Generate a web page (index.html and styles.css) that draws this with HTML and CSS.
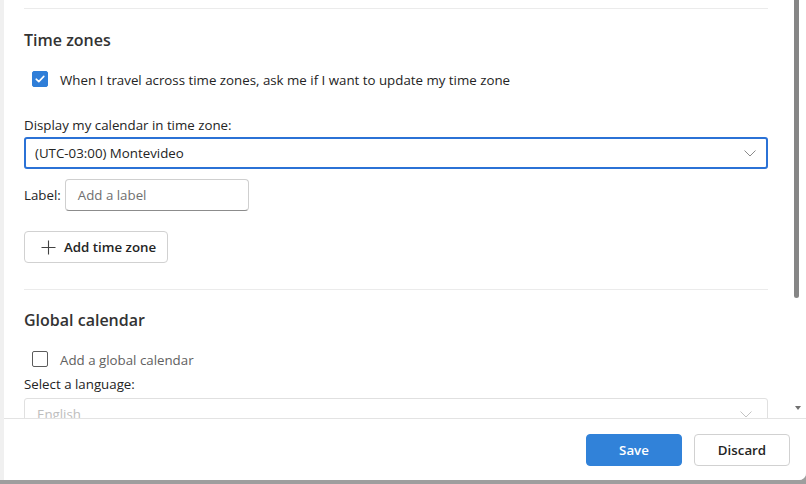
FILE: index.html
```html
<!DOCTYPE html>
<html>
	<head>
		<meta charset="UTF-8">
		<title>Calendar settings</title>
		<link rel="stylesheet" href="styles.css">
	</head>
	<body>
		<div class="window">
			<div class="dialog">
				<div class="scroll">
					<div class="content">
						<div class="divider"></div>

						<!--时区-->
						<h2 class="heading">Time zones</h2>
						<label class="check-row">
							<span class="box checked">
								<svg width="10" height="8" viewBox="0 0 10 8"><path d="M1.2 4.2 L3.8 6.6 L8.8 1.4" fill="none" stroke="#fff" stroke-width="1.6" stroke-linecap="round" stroke-linejoin="round"/></svg>
							</span>
							<span class="check-text">When I travel across time zones, ask me if I want to update my time zone</span>
						</label>

						<div class="field-label">Display my calendar in time zone:</div>
						<div class="select focused">
							<span>(UTC-03:00) Montevideo</span>
							<svg class="chevron" width="12" height="7" viewBox="0 0 12 7"><path d="M0.5 0.5 L6 6 L11.5 0.5" fill="none" stroke="#8a8a8a" stroke-width="1"/></svg>
						</div>

						<div class="label-row">
							<span>Label:</span>
							<div class="input">Add a label</div>
						</div>

						<button class="btn-add">
							<svg width="15" height="15" viewBox="0 0 15 15"><path d="M7.5 0.5 V14.5 M0.5 7.5 H14.5" stroke="#424242" stroke-width="1.1"/></svg>
							<span>Add time zone</span>
						</button>

						<div class="divider second"></div>

						<!--全球日历-->
						<h2 class="heading">Global calendar</h2>
						<label class="check-row">
							<span class="box"></span>
							<span class="check-text muted">Add a global calendar</span>
						</label>

						<div class="field-label tight">Select a language:</div>
						<div class="select disabled">
							<span>English</span>
							<svg class="chevron" width="12" height="7" viewBox="0 0 12 7"><path d="M0.5 0.5 L6 6 L11.5 0.5" fill="none" stroke="#c4c4c4" stroke-width="1"/></svg>
						</div>
					</div>
					<div class="scroll-thumb"></div>
					<div class="scroll-arrow"></div>
				</div>

				<div class="footer">
					<button class="btn primary">Save</button>
					<button class="btn">Discard</button>
				</div>
			</div>
		</div>
	</body>
</html>
```

FILE: styles.css
```css
*{
	padding: 0;
	margin: 0;
	box-sizing: border-box;
}
body{
	width: 806px;
	height: 484px;
	overflow: hidden;
	background-color: #9e9e9e;
	font-family: "Open Sans", "Noto Sans", sans-serif;
	font-size: 13.3px;
	color: #242424;
}
.window{
	height: 480px;
	background-color: #f0f0f0;
	padding-left: 4px;
	border-bottom-right-radius: 7px;
}
.dialog{
	height: 480px;
	background-color: #fff;
	border-bottom-right-radius: 7px;
	display: flex;
	flex-direction: column;
}
.scroll{
	height: 418px;
	overflow: hidden;
	position: relative;
}
.content{
	padding: 8px 38px 0 20px;
}
.divider{
	height: 1px;
	background-color: #ebebeb;
}
.divider.second{
	margin-top: 26px;
}
.heading{
	margin-top: 19px;
	font-size: 16px;
	font-weight: 600;
	line-height: 24px;
	color: #333;
}
.divider.second + .heading{
	margin-top: 18px;
}
.check-row{
	display: flex;
	align-items: center;
	gap: 12px;
	margin-top: 19px;
	padding-left: 8px;
	height: 16px;
}
.box{
	width: 16px;
	height: 16px;
	border: 1px solid #5c5c5c;
	border-radius: 2px;
	display: flex;
	align-items: center;
	justify-content: center;
	flex-shrink: 0;
}
.box.checked{
	background-color: #2f7ed8;
	border-color: #2f7ed8;
}
.check-text{
	line-height: 16px;
	padding-top: 1px;
}
.check-text.muted{
	color: #616161;
	padding-top: 2px;
}
.field-label{
	margin-top: 28px;
	line-height: 20px;
}
.field-label.tight{
	margin-top: 7px;
}
.select{
	margin-top: 2px;
	height: 32px;
	display: flex;
	align-items: center;
	justify-content: space-between;
	padding: 0 10px 0 9px;
	border-radius: 3px;
}
.select.focused{
	border: 2px solid #2b72d6;
}
.select.disabled{
	margin-top: 4px;
	border: 1px solid #e0e0e0;
	color: #bdbdbd;
	padding: 0 15px 0 12px;
}
.label-row{
	margin-top: 10px;
	display: flex;
	align-items: center;
	gap: 4px;
}
.input{
	width: 184px;
	height: 32px;
	border: 1px solid #cfcfcf;
	border-bottom-color: #8c8c8c;
	border-radius: 4px;
	padding-left: 12px;
	line-height: 30px;
	color: #707070;
}
.btn-add{
	margin-top: 20px;
	height: 32px;
	width: 144px;
	display: flex;
	align-items: center;
	gap: 8px;
	padding-left: 16px;
	background-color: #fff;
	border: 1px solid #d1d1d1;
	border-radius: 4px;
	font-family: inherit;
	font-size: 13.3px;
	font-weight: 600;
	color: #242424;
}
.scroll-thumb{
	position: absolute;
	top: 0;
	left: 790px;
	width: 5px;
	height: 298px;
	background-color: #868686;
	border-radius: 0 0 3px 3px;
}
.scroll-arrow{
	position: absolute;
	top: 406px;
	left: 791px;
	width: 0;
	height: 0;
	border-left: 3px solid transparent;
	border-right: 3px solid transparent;
	border-top: 4px solid #707070;
}
.footer{
	flex: 1;
	border-top: 1px solid #e3e3e3;
	display: flex;
	justify-content: flex-end;
	gap: 12px;
	padding: 15px 16px 0 0;
}
.btn{
	width: 96px;
	height: 32px;
	background-color: #fff;
	border: 1px solid #d1d1d1;
	border-radius: 4px;
	font-family: inherit;
	font-size: 13.3px;
	font-weight: 600;
	color: #242424;
}
.btn.primary{
	background-color: #3182d9;
	border-color: #3182d9;
	color: #fff;
}
```
